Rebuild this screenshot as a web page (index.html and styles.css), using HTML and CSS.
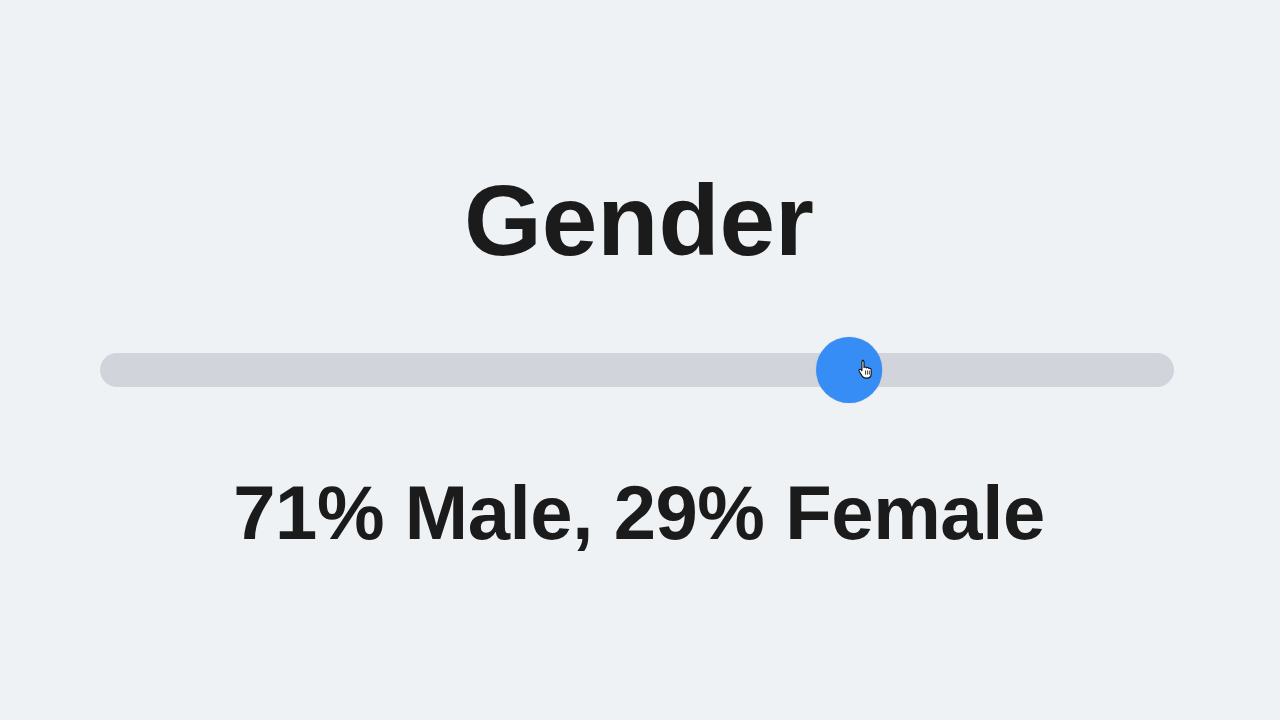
FILE: index.html
```html
<!DOCTYPE html>
<html lang="en">
<head>
<meta charset="utf-8">
<title>Gender</title>
<link rel="stylesheet" href="styles.css">
</head>
<body>
<main class="page">
  <h1 class="title">Gender</h1>
  <div class="slider">
    <div class="track"></div>
    <div class="thumb" style="left: 71%;">
      <svg class="cursor" width="14" height="20" viewBox="0 0 16 22">
        <path d="M5 1.2c1 0 1.7 0.7 1.7 1.7v6.4c0.3-0.4 0.8-0.6 1.3-0.6 0.8 0 1.4 0.5 1.6 1.1 0.3-0.3 0.7-0.5 1.2-0.5 0.8 0 1.4 0.5 1.6 1.2 0.3-0.2 0.6-0.3 0.9-0.3 0.9 0 1.6 0.7 1.6 1.6v4.6c0 2.9-2 5-4.8 5H8.6c-1.8 0-3-0.8-4-2.3L1.2 13.6c-0.5-0.8-0.3-1.7 0.4-2.1 0.7-0.4 1.5-0.2 2 0.5l0.7 1V2.9c0-1 0.7-1.7 1.7-1.7z" fill="#fff" stroke="#141414" stroke-width="1.3" stroke-linejoin="round"/>
        <path d="M8.4 13.2v3.8M10.6 13.2v3.8M12.8 13.2v3.8" stroke="#141414" stroke-width="0.9" stroke-linecap="round"/>
      </svg>
    </div>
  </div>
  <p class="result">71% Male, 29% Female</p>
</main>
</body>
</html>
```
FILE: styles.css
```css
html, body {
  margin: 0;
  padding: 0;
  background: #eff2f4;
}
.page {
  height: 720px;
  box-sizing: border-box;
  padding: 170px 106px 0 100px;
  display: flex;
  flex-direction: column;
  align-items: stretch;
  font-family: "Liberation Sans", Arial, sans-serif;
  color: #1b1b1b;
}
.title {
  margin: 0;
  font-size: 100px;
  line-height: 1;
  font-weight: 700;
  text-align: center;
  padding-left: 4px;
}
.slider {
  position: relative;
  margin-top: 67px;
  height: 66px;
  display: flex;
  align-items: center;
}
.track {
  flex: 1;
  height: 34px;
  border-radius: 17px;
  background: #d1d4da;
}
.thumb {
  position: absolute;
  top: 0;
  width: 66px;
  height: 66px;
  margin-left: -33px;
  border-radius: 50%;
  background: #368df6;
  transform: translateX(calc(33px - 0.71 * 66px));
  box-shadow: 0 0 1px rgba(30, 90, 170, 0.5);
}
.cursor {
  position: absolute;
  left: 42px;
  top: 22px;
}
.result {
  margin: 72px 0 0;
  font-size: 76px;
  letter-spacing: -0.4px;
  line-height: 1;
  font-weight: 700;
  text-align: center;
  padding-left: 4px;
}
```
